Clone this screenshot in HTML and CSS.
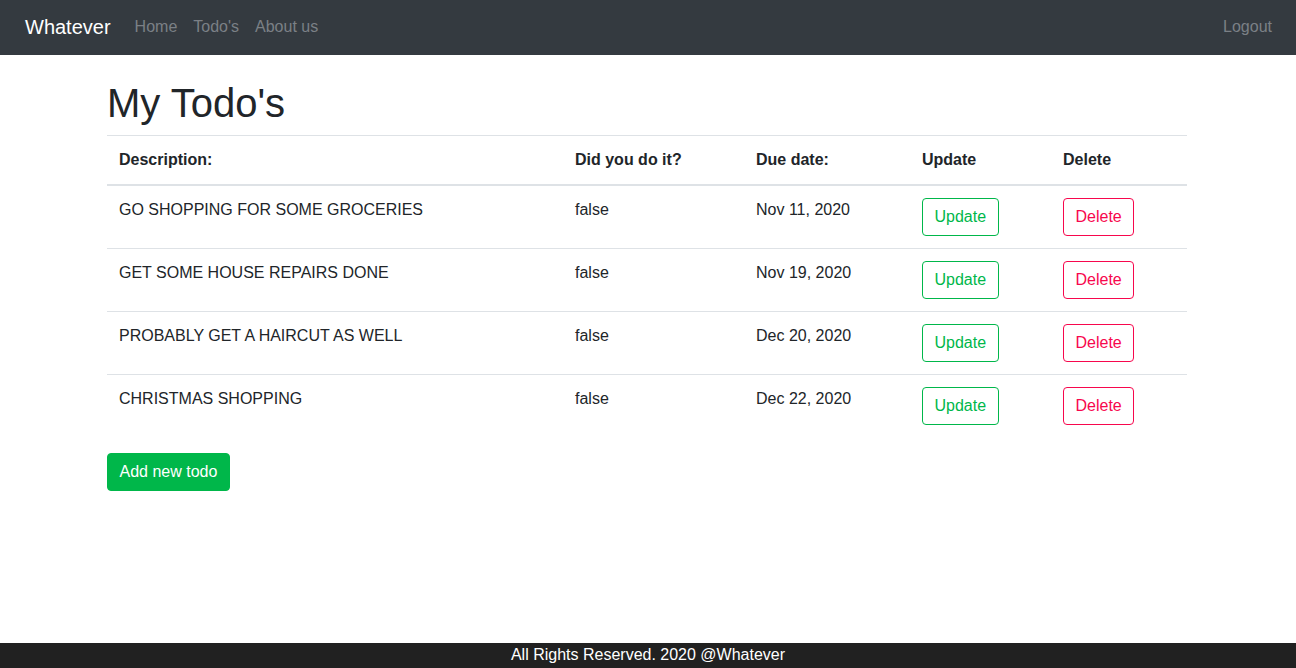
FILE: index.html
```html
<!DOCTYPE html>
<html lang="en">
<head>
    <meta charset="UTF-8">
    <meta name="viewport" content="width=device-width, initial-scale=1.0">
    <title>My Todo's</title>
    <link rel="stylesheet" href="styles.css">
</head>
<body>
    <div class="page">
        <nav class="navbar">
            <a class="brand" href="#">Whatever</a>
            <ul class="nav-links">
                <li><a href="#">Home</a></li>
                <li><a href="#">Todo's</a></li>
                <li><a href="#">About us</a></li>
            </ul>
            <ul class="nav-links nav-right">
                <li><a href="#">Logout</a></li>
            </ul>
        </nav>

        <div class="container">
            <h1>My Todo's</h1>
            <table class="todo-table">
                <thead>
                    <tr>
                        <th class="col-desc">Description:</th>
                        <th class="col-done">Did you do it?</th>
                        <th class="col-date">Due date:</th>
                        <th class="col-update">Update</th>
                        <th class="col-delete">Delete</th>
                    </tr>
                </thead>
                <tbody>
                    <tr>
                        <td>GO SHOPPING FOR SOME GROCERIES</td>
                        <td>false</td>
                        <td>Nov 11, 2020</td>
                        <td><button class="btn btn-update">Update</button></td>
                        <td><button class="btn btn-delete">Delete</button></td>
                    </tr>
                    <tr>
                        <td>GET SOME HOUSE REPAIRS DONE</td>
                        <td>false</td>
                        <td>Nov 19, 2020</td>
                        <td><button class="btn btn-update">Update</button></td>
                        <td><button class="btn btn-delete">Delete</button></td>
                    </tr>
                    <tr>
                        <td>PROBABLY GET A HAIRCUT AS WELL</td>
                        <td>false</td>
                        <td>Dec 20, 2020</td>
                        <td><button class="btn btn-update">Update</button></td>
                        <td><button class="btn btn-delete">Delete</button></td>
                    </tr>
                    <tr>
                        <td>CHRISTMAS SHOPPING</td>
                        <td>false</td>
                        <td>Dec 22, 2020</td>
                        <td><button class="btn btn-update">Update</button></td>
                        <td><button class="btn btn-delete">Delete</button></td>
                    </tr>
                </tbody>
            </table>
            <button class="btn btn-add">Add new todo</button>
        </div>

        <footer class="footer">All Rights Reserved. 2020 @Whatever</footer>
    </div>
</body>
</html>
```

FILE: styles.css
```css
* {
    box-sizing: border-box;
}
html, body {
    height: 100%;
}
body {
    margin: 0;
    font-family: "Liberation Sans", Arial, sans-serif;
    font-size: 16px;
    line-height: 1.5;
    color: #212529;
    background: #fff;
}
.page {
    min-height: 100%;
    display: flex;
    flex-direction: column;
}
.navbar {
    display: flex;
    align-items: center;
    height: 55px;
    padding: 0 16px 2px;
    background-color: #343a40;
}
.brand {
    margin-left: 9px;
    margin-right: 16px;
    font-size: 20px;
    color: #fff;
    text-decoration: none;
}
.nav-links {
    display: flex;
    list-style: none;
    margin: 0;
    padding: 0;
}
.nav-links a {
    display: block;
    padding: 8px;
    color: #7b8086;
    text-decoration: none;
}
.nav-right {
    margin-left: auto;
}
.container {
    flex: 1;
    width: 1080px;
    margin: 0 auto 0 107px;
    padding-top: 24px;
}
h1 {
    margin: 0 0 8px;
    font-size: 40px;
    font-weight: 400;
    line-height: 1.2;
}
.todo-table {
    width: 1080px;
    border-collapse: collapse;
    margin-bottom: 16px;
}
.todo-table th,
.todo-table td {
    padding: 12px;
    text-align: left;
    vertical-align: top;
    border-top: 1px solid #dee2e6;
}
.todo-table th {
    font-weight: 700;
    border-bottom: 2px solid #dee2e6;
}
.col-desc { width: 456px; }
.col-done { width: 181px; }
.col-date { width: 166px; }
.col-update { width: 141px; }
.col-delete { width: 136px; }
.btn {
    display: inline-block;
    height: 38px;
    padding: 6px 11.5px;
    font-family: inherit;
    font-size: 16px;
    line-height: 24px;
    border: 1px solid transparent;
    border-radius: 4px;
    background: transparent;
    cursor: pointer;
}
.btn-update {
    color: #00b74a;
    border-color: #00b74a;
}
.btn-delete {
    color: #f7074d;
    border-color: #f7074d;
}
.btn-add {
    color: #fff;
    background-color: #00b74a;
    border-color: #00b74a;
}
.footer {
    height: 25px;
    line-height: 24px;
    text-align: center;
    color: #fff;
    background-color: #212121;
}
```
